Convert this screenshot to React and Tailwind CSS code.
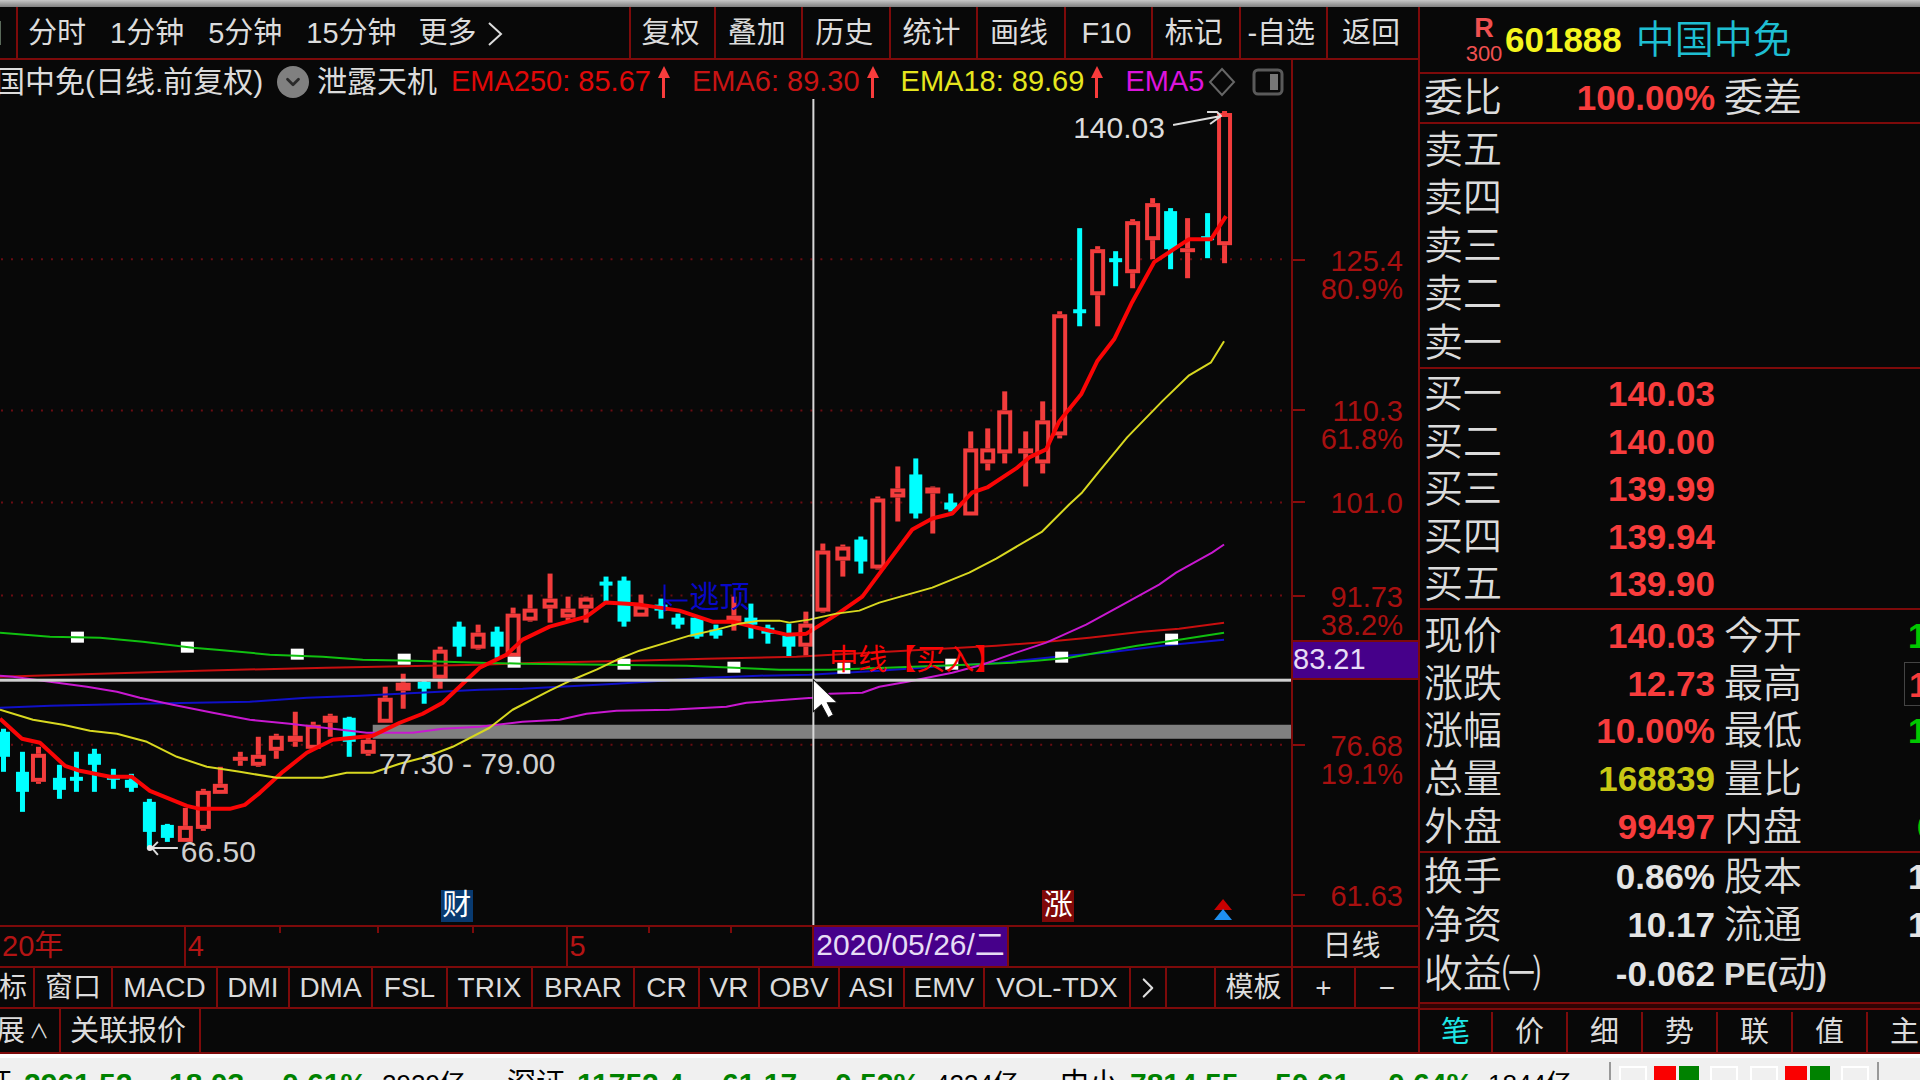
import React from "react";
import { ChevronDown, ChevronRight } from "lucide-react";

const PLOT = { left: 0, top: 100, width: 1292, height: 825 };

const up = "up";
const down = "down";

// [direction, x, high, low, body top, body bottom]
const CANDLES = [
  [down, 3, 729, 772, 732, 757],
  [down, 22, 752, 812, 772, 792],
  [up, 38, 747, 784, 754, 782],
  [down, 59, 765, 799, 778, 790],
  [down, 76, 752, 792, 777, 780],
  [down, 94, 749, 792, 754, 765],
  [down, 113, 769, 789, 776, 780],
  [down, 131, 774, 792, 780, 788],
  [down, 149, 799, 849, 802, 832],
  [down, 167, 824, 842, 825, 838],
  [up, 185, 808, 842, 826, 842],
  [up, 203, 789, 831, 791, 829],
  [up, 220, 767, 794, 784, 794],
  [up, 240, 752, 766, 757, 761],
  [up, 258, 737, 767, 755, 766],
  [up, 276, 734, 759, 736, 751],
  [up, 295, 712, 747, 736, 742],
  [up, 313, 722, 750, 725, 749],
  [up, 330, 714, 737, 716, 723],
  [down, 349, 717, 757, 718, 742],
  [up, 368, 737, 756, 740, 754],
  [up, 385, 687, 723, 698, 723],
  [up, 403, 674, 709, 683, 691],
  [down, 424, 680, 704, 682, 689],
  [up, 440, 647, 689, 650, 679],
  [down, 459, 622, 657, 627, 647],
  [up, 478, 625, 650, 633, 649],
  [down, 497, 627, 658, 632, 647],
  [up, 513, 608, 657, 614, 657],
  [up, 530, 595, 622, 609, 621],
  [up, 550, 574, 623, 599, 609],
  [up, 568, 597, 621, 609, 618],
  [up, 586, 597, 623, 598, 609],
  [down, 606, 577, 602, 582, 585],
  [down, 624, 577, 627, 581, 622],
  [up, 641, 595, 617, 606, 617],
  [down, 661, 599, 619, 605, 611],
  [down, 678, 614, 629, 618, 625],
  [down, 697, 617, 639, 618, 637],
  [down, 716, 625, 639, 630, 636],
  [up, 734, 597, 631, 616, 622],
  [down, 751, 604, 639, 618, 625],
  [down, 768, 625, 644, 628, 634],
  [down, 789, 624, 657, 636, 647],
  [up, 806, 612, 656, 624, 647],
  [up, 823, 544, 613, 551, 612],
  [up, 843, 545, 577, 547, 561],
  [down, 861, 537, 574, 540, 562],
  [up, 878, 497, 570, 499, 569],
  [up, 898, 467, 522, 489, 498],
  [down, 916, 459, 519, 475, 514],
  [up, 933, 487, 534, 488, 494],
  [down, 951, 494, 512, 503, 510],
  [up, 971, 432, 516, 449, 516],
  [up, 988, 429, 471, 449, 464],
  [up, 1005, 392, 464, 411, 454],
  [up, 1026, 432, 487, 449, 454],
  [up, 1043, 402, 474, 421, 464],
  [up, 1060, 312, 439, 315, 436],
  [down, 1080, 229, 327, 310, 313],
  [up, 1098, 247, 327, 250, 296],
  [down, 1116, 252, 287, 259, 263],
  [up, 1133, 220, 289, 222, 274],
  [up, 1153, 199, 260, 204, 241],
  [down, 1171, 209, 270, 212, 250],
  [up, 1188, 219, 279, 249, 253],
  [down, 1208, 214, 259, 237, 240],
  [up, 1225, 112, 264, 114, 246],
];

const EMA6 =
  "0,719 22,739 40,743 65,766 80,771 110,777 132,777 150,791 187,806 200,809 230,809 245,805 260,793 283,772 307,753 333,740 373,736 400,723 423,714 443,703 480,668 507,655 523,640 550,627 587,617 606,603 640,605 680,611 713,622 733,622 757,628 787,635 807,634 823,624 840,613 863,597 883,570 913,530 933,519 953,514 973,493 988,488 1017,469 1030,458 1047,450 1060,422 1082,395 1098,362 1115,340 1133,303 1155,263 1190,240 1212,240 1227,217";
const EMA18 =
  "0,710 33,720 63,725 90,731 117,734 147,742 177,757 207,767 240,772 277,778 323,778 347,773 373,773 400,764 427,757 453,747 490,728 513,710 550,691 573,680 597,670 620,659 640,651 667,643 690,636 717,630 740,624 760,621 780,621 790,623 810,620 837,614 860,611 880,603 933,588 970,573 997,559 1043,532 1070,505 1083,493 1100,472 1128,438 1163,402 1190,376 1212,363 1225,342";
const EMA55 =
  "0,676 13,677 50,682 87,687 117,692 140,698 173,705 213,713 250,720 290,724 333,729 367,733 413,733 443,729 480,727 523,722 560,720 587,714 617,711 670,710 727,707 747,703 813,698 830,694 863,693 880,687 908,682 953,673 983,665 1017,653 1047,643 1087,625 1120,607 1160,585 1177,573 1213,553 1225,545";
const EMA_BLUE =
  "0,708 50,706 140,704 250,702 307,698 360,696 420,693 480,690 523,689 617,684 707,678 760,676 810,675 880,671 950,666 1000,663 1067,656 1107,653 1163,646 1225,640";
const EMA_GREEN =
  "0,633 50,637 100,638 143,642 193,648 217,650 270,655 323,657 363,660 413,661 480,663 523,664 687,666 780,670 830,670 887,668 967,665 1013,663 1037,661 1070,658 1138,646 1180,640 1225,633";
const EMA250 =
  "0,677 67,675 200,671 327,668 480,665 540,663 633,661 707,659 797,657 833,655 997,646 1037,643 1090,638 1143,632 1180,629 1225,623";

const MARKERS = [
  [77, 637], [187, 647], [297, 654], [404, 659], [514, 662], [624, 664],
  [734, 667], [844, 668], [952, 664], [1062, 657], [1172, 639],
];

const GRID_LINES = [260, 411, 503, 596, 745];

const PRICES = [
  { y: 260, price: "125.4", pct: "80.9%" },
  { y: 410, price: "110.3", pct: "61.8%" },
  { y: 502, price: "101.0" },
  { y: 595, price: "91.73", pct: "38.2%" },
  { y: 744, price: "76.68", pct: "19.1%" },
  { y: 894, price: "61.63" },
];

const TOOLS = ["复权", "叠加", "历史", "统计", "画线", "F10", "标记", "-自选", "返回"];
const PERIODS = ["分时", "1分钟", "5分钟", "15分钟"];

const INDICATORS = [
  ["窗口", "w-[78px]"],
  ["MACD", "w-[105px]"],
  ["DMI", "w-[72px]"],
  ["DMA", "w-[83px]"],
  ["FSL", "w-[75px]"],
  ["TRIX", "w-[85px]"],
  ["BRAR", "w-[102px]"],
  ["CR", "w-[65px]"],
  ["VR", "w-[60px]"],
  ["OBV", "w-[80px]"],
  ["ASI", "w-[65px]"],
  ["EMV", "w-[80px]"],
  ["VOL-TDX", "w-[146px]"],
];

const RED = "text-[#f83c3c]";
const WHITE = "text-[#e4e4e4]";
const GREEN = "text-[#00c800]";

const SELLS = ["卖五", "卖四", "卖三", "卖二", "卖一"].map((label) => ({ label }));
const BUYS = [
  ["买一", "140.03"],
  ["买二", "140.00"],
  ["买三", "139.99"],
  ["买四", "139.94"],
  ["买五", "139.90"],
].map(([label, value]) => ({ label, value, tone: RED }));
const QUOTES = [
  { label: "现价", value: "140.03", tone: RED, label2: "今开", value2: "1", tone2: GREEN },
  { label: "涨跌", value: "12.73", tone: RED, label2: "最高", value2: "1", tone2: RED, boxed: true },
  { label: "涨幅", value: "10.00%", tone: RED, label2: "最低", value2: "1", tone2: GREEN },
  { label: "总量", value: "168839", tone: "text-[#c8c814]", label2: "量比" },
  { label: "外盘", value: "99497", tone: RED, label2: "内盘", value2: "6", tone2: GREEN, late: true },
];
const FUNDAMENTALS = [
  { label: "换手", value: "0.86%", tone: WHITE, label2: "股本", value2: "1", tone2: WHITE },
  { label: "净资", value: "10.17", tone: WHITE, label2: "流通", value2: "1", tone2: WHITE },
  { label: "收益㈠", value: "-0.062", tone: WHITE, label2: "PE" },
];

const SIDE_TABS = ["笔", "价", "细", "势", "联", "值", "主"];

const INDEXES = [
  ["上证", "2961.52", "-18.03", "-0.61%", "2929亿"],
  ["深证", "11752.4", "-61.17", "-0.52%", "4234亿"],
  ["中小", "7814.55", "-50.61", "-0.64%", "1844亿"],
];

function place(x, y) {
  return {
    left: `${((x - PLOT.left) / PLOT.width) * 100}%`,
    top: `${((y - PLOT.top) / PLOT.height) * 100}%`,
  };
}

function Candle({ data }) {
  const [dir, x, high, low, top, bottom] = data;
  if (dir === down) {
    return (
      <g fill="#00ffff">
        <rect x={x - 2} y={high} width="5" height={low - high} />
        <rect x={x - 6} y={top} width="13" height={Math.max(bottom - top, 4)} />
      </g>
    );
  }
  const small = bottom - top < 8;
  return (
    <g fill="#f23c3c">
      <rect x={x - 2} y={high} width="5" height={Math.max(top - high, 0)} />
      <rect x={x - 2} y={bottom} width="5" height={Math.max(low - bottom, 0)} />
      {small ? (
        <rect x={x - 7} y={top} width="15" height={bottom - top} />
      ) : (
        <rect
          x={x - 5}
          y={top + 2}
          width="11"
          height={bottom - top - 4}
          fill="#080808"
          stroke="#f23c3c"
          strokeWidth="4"
        />
      )}
    </g>
  );
}

function Plot() {
  return (
    <div className="relative min-h-0 flex-1">
      <svg
        className="absolute inset-0 size-full"
        viewBox="0 100 1292 825"
        preserveAspectRatio="none"
        role="img"
        aria-label="日线"
      >
        {GRID_LINES.map((y) => (
          <line key={y} x1="1" x2="1290" y1={y} y2={y} stroke="#6a0c12" strokeWidth="2" strokeDasharray="2 8" />
        ))}
        <rect x="373" y="725" width="919" height="14" fill="#808080" />
        {CANDLES.map((c) => (
          <Candle key={c[1]} data={c} />
        ))}
        <g fill="none" strokeWidth="2" strokeLinejoin="round">
          <polyline points={EMA250} stroke="#c80f0f" />
          <polyline points={EMA_BLUE} stroke="#1010c8" />
          <g fill="#fff">
            {MARKERS.map(([x, y]) => (
              <rect key={x} x={x - 6} y={y - 5} width="13" height="11" />
            ))}
          </g>
          <polyline points={EMA_GREEN} stroke="#10c010" />
          <polyline points={EMA55} stroke="#c818d0" />
          <polyline points={EMA6} stroke="#fa0505" strokeWidth="4" />
          <polyline points={EMA18} stroke="#d8d820" />
          <path d="M665 585V612M665 601H688M665 600L672 606" stroke="#0808c8" />
          <path d="M178 848H152M158 842L152 848L158 855" stroke="#dcdcdc" />
          <path d="M1174 126L1222 117M1208 113H1218L1222 117L1211 125" stroke="#dcdcdc" />
        </g>
        <circle cx="150" cy="848" r="3" fill="#e8e8e8" />
        <rect x="0" y="679" width="1292" height="3" fill="#d0d0d0" />
        <rect x="813" y="100" width="2" height="825" fill="#d8d8d8" />
        <path d="M1224 899L1233 910H1215Z" fill="#c80000" />
        <path d="M1224 909L1233 920H1215Z" fill="#1e90f0" />
        <path
          d="M814 680V712L822 705L829 718L834 715L828 703H838Z"
          fill="#fff"
          stroke="#111"
          strokeWidth="1"
        />
      </svg>
      <Note x={1074} y={129} className="text-[30px] text-[#dcdcdc]">140.03</Note>
      <Note x={379} y={764} className="text-[30px] text-[#d0d0d0]">77.30 - 79.00</Note>
      <Note x={181} y={852} className="text-[30px] text-[#d0d0d0]">66.50</Note>
      <Note x={690} y={597} className="text-[30px] text-[#0808c8]">逃顶</Note>
      <Note x={830} y={660} className="text-[29px] text-[#fa0505]">中线【买入】</Note>
      <Note x={441} y={906} className="flex h-8 w-8 items-center justify-center bg-[#083a70] text-white">财</Note>
      <Note x={1043} y={906} className="flex h-8 w-8 items-center justify-center bg-[#800808] text-white">涨</Note>
    </div>
  );
}

function Note({ x, y, className, children }) {
  return (
    <span className={`absolute -translate-y-1/2 whitespace-nowrap leading-none ${className}`} style={place(x, y)}>
      {children}
    </span>
  );
}

function UpArrow() {
  return (
    <svg width="14" height="32" viewBox="0 0 14 32" className="shrink-0" aria-hidden="true">
      <path d="M7 0L13 12H1Z" fill="#f83c3c" />
      <rect x="5" y="10" width="3" height="22" fill="#f83c3c" />
    </svg>
  );
}

function Ema({ name, value, tone }) {
  return (
    <span className={`flex items-center ${tone}`}>
      <span className={value ? "mr-1.5" : "mr-1"}>{value ? `${name}: ${value}` : name}</span>
      {value && <UpArrow />}
    </span>
  );
}

function ChartTitle() {
  return (
    <div className="flex h-[39px] shrink-0 items-center overflow-hidden whitespace-nowrap pt-1">
      <span className="-ml-[5px] w-[282px] shrink-0 text-[30px]">国中免(日线.前复权)</span>
      <button type="button" aria-label="展开" className="mr-2 flex size-8 items-center justify-center rounded-full bg-[#808080]">
        <ChevronDown size={22} color="#2a2a2a" strokeWidth={3} />
      </button>
      <span className="mr-3.5 text-[30px]">泄露天机</span>
      <div className="flex gap-[21px]">
        <Ema name="EMA250" value="85.67" tone="text-[#e00808]" />
        <Ema name="EMA6" value="89.30" tone="text-[#c81414]" />
        <Ema name="EMA18" value="89.69" tone="text-[#e6e61e]" />
        <Ema name="EMA5" tone="text-[#dc14dc]" />
      </div>
      <svg width="28" height="30" viewBox="0 0 28 30" className="mr-4 shrink-0" aria-hidden="true">
        <path d="M14 2L26 15L14 28L2 15Z" fill="none" stroke="#666" strokeWidth="2" />
      </svg>
      <button type="button" aria-label="侧栏" className="shrink-0">
        <svg width="32" height="28" viewBox="0 0 32 28" aria-hidden="true">
          <rect x="2" y="2" width="28" height="24" rx="4" fill="none" stroke="#5a5a5a" strokeWidth="3" />
          <rect x="18" y="6" width="8" height="16" fill="#777" />
        </svg>
      </button>
    </div>
  );
}

function Toolbar() {
  return (
    <div className="flex h-[53px] shrink-0 border-b-2 border-[#7d0a0a]">
      <div className="flex w-[18px] shrink-0 items-center border-r-2 border-[#7d0a0a]">
        <span className="h-6 w-px bg-[#5a6a5a]" />
      </div>
      <nav className="flex flex-1 items-center gap-6 pl-[10px] pt-0.5">
        {PERIODS.map((p) => (
          <button type="button" key={p}>{p}</button>
        ))}
        <button type="button" className="-ml-0.5 flex items-center">
          更多
          <svg width="32" height="28" viewBox="0 0 32 28" fill="none" stroke="currentColor" strokeWidth="2" aria-hidden="true">
            <path d="M12 3L24 14L12 25" />
          </svg>
        </button>
      </nav>
      <div className="grid w-[789px] shrink-0 grid-cols-[85px_repeat(7,minmax(0,1fr))_92px]">
        {TOOLS.map((t) => (
          <button type="button" key={t} className="whitespace-nowrap border-l-2 border-[#7d0a0a] pr-1 pt-0.5">{t}</button>
        ))}
      </div>
    </div>
  );
}

function PriceAxis() {
  return (
    <div className="flex w-[127px] shrink-0 flex-col border-l-2 border-[#7d0a0a] pt-[39px]">
      <div className="relative flex-1 text-[#a81010]">
        {PRICES.map(({ y, price, pct }) => (
          <div key={y} className="absolute inset-x-0" style={{ top: place(0, y).top }}>
            <div className="h-0.5 w-3 bg-[#8a0c0c]" />
            <div className="-mt-[14px] pr-[15px] text-right leading-7">
              <div>{price}</div>
              {pct && <div>{pct}</div>}
            </div>
          </div>
        ))}
        <div
          className="absolute inset-x-0 flex h-10 items-center border-y-2 border-[#7d0a0a] bg-[#46008a] text-[#e6dcf5]"
          style={{ top: place(0, 640).top }}
        >
          83.21
        </div>
      </div>
    </div>
  );
}

function TimeAxis() {
  const at = (x) => ({ left: `${(x / 1292) * 100}%` });
  return (
    <div className="flex h-[41px] shrink-0 border-t-2 border-[#7d0a0a]">
      <div className="relative flex-1 text-[#b41414]">
        <span className="absolute inset-y-0 left-0 flex items-center pl-0.5">20年</span>
        <span className="absolute inset-y-0 flex items-center border-l-2 border-[#7d0a0a] pl-0.5" style={at(184)}>4</span>
        <span className="absolute inset-y-0 flex items-center border-l-2 border-[#7d0a0a] pl-0.5" style={at(566)}>5</span>
        {[279, 377, 472, 649, 731].map((x) => (
          <span key={x} className="absolute top-0 h-1.5 w-0.5 bg-[#7d0a0a]" style={at(x)} />
        ))}
        <span
          className="absolute inset-y-0 flex w-[197px] items-center whitespace-nowrap border-x-2 border-[#7d0a0a] bg-[#46008a] pb-1 pl-0.5 text-[30px] text-[#e6dcf5]"
          style={at(813)}
        >
          2020/05/26/二
        </span>
      </div>
      <button type="button" className="w-[127px] border-l-2 border-[#7d0a0a] pr-2">日线</button>
    </div>
  );
}

function IndicatorBar() {
  const cell = "shrink-0 border-r-2 border-[#7d0a0a] whitespace-nowrap";
  return (
    <div className="flex h-[43px] shrink-0 border-y-2 border-[#7d0a0a] text-[28px]">
      <button type="button" className={`flex w-[35px] items-center justify-end overflow-hidden pr-1.5 ${cell}`}>指标</button>
      {INDICATORS.map(([name, width]) => (
        <button type="button" key={name} className={`${width} ${cell}`}>{name}</button>
      ))}
      <button type="button" aria-label="更多指标" className={`flex w-[36px] items-center justify-center ${cell}`}>
        <ChevronRight size={36} strokeWidth={1.5} />
      </button>
      <span className={`flex-1 ${cell}`} />
      <button type="button" className="w-[75px] shrink-0">模板</button>
      <button type="button" className="w-[63px] shrink-0 border-l-2 border-[#7d0a0a]">+</button>
      <button type="button" className="w-[64px] shrink-0 border-l-2 border-[#7d0a0a]">−</button>
    </div>
  );
}

function Row({ label, value, tone, label2, value2, tone2, boxed, late }) {
  return (
    <tr>
      <th scope="row" className="w-[84px] whitespace-nowrap p-0 pl-1 text-left font-[350]">{label}</th>
      <td className={`w-[212px] p-0 pr-px text-right font-["Liberation_Sans"] text-[35px] font-bold ${tone || ""}`}>{value}</td>
      <th scope="row" className="w-[188px] whitespace-nowrap p-0 pl-2 text-left font-[350]">
        {label2 === "PE" ? (
          <span className="flex items-center">
            <span className="text-[32px] font-bold">PE(</span>
            动
            <span className="text-[32px] font-bold">)</span>
          </span>
        ) : (
          label2
        )}
      </th>
      <td className={`p-0 font-["Liberation_Sans"] text-[35px] font-bold ${tone2 || ""}`}>
        <div className={`h-11 overflow-hidden ${boxed ? "border border-r-0 border-[#444]" : ""} ${late ? "pl-[13px]" : "pl-1"}`}>{value2}</div>
      </td>
    </tr>
  );
}

function Block({ rows, caption, className }) {
  return (
    <div className={`flex min-h-0 overflow-hidden border-b-2 border-[#7d0a0a] ${className}`}>
      <table className="h-full w-full table-fixed border-collapse text-[39px] leading-[44px]" aria-label={caption}>
        <tbody>
          {rows.map((r) => (
            <Row key={r.label} {...r} />
          ))}
        </tbody>
      </table>
    </div>
  );
}

function QuotePanel() {
  return (
    <aside className="flex w-[502px] shrink-0 flex-col overflow-hidden border-l-2 border-[#7d0a0a] text-[#dcdcdc]">
      <header className="flex h-[67px] shrink-0 items-center border-b-2 border-[#7d0a0a] pl-[45px]">
        <div className="mr-0.5 flex w-[38px] flex-col items-center text-[#f05050]">
          <span className="text-[27px] font-bold leading-7">R</span>
          <span className="text-[22px] leading-6">300</span>
        </div>
        <span className="mr-3.5 text-[35px] font-bold text-[#f5f51e]">601888</span>
        <h1 className="text-[39px] font-[350] text-[#1ebed2]">中国中免</h1>
      </header>
      <Block caption="委比" className="h-[50px] shrink-0" rows={[{ label: "委比", value: "100.00%", tone: RED, label2: "委差" }]} />
      <Block caption="卖盘" className="flex-[240] pt-0.5" rows={SELLS} />
      <Block caption="买盘" className="flex-[237] pt-0.5" rows={BUYS} />
      <Block caption="行情" className="flex-[238] pt-0.5" rows={QUOTES} />
      <Block caption="基本面" className="flex-[145] pb-1" rows={FUNDAMENTALS} />
      <div className="h-1 shrink-0 bg-[#300404]" />
      <div className="flex h-[46px] shrink-0 border-y-2 border-[#7d0a0a] pt-0.5 text-[29px]">
        {SIDE_TABS.map((t, i) => (
          <button
            type="button"
            key={t}
            className={`shrink-0 border-r-2 border-[#7d0a0a] ${i === 0 ? "w-[73px] text-[#1ee6e6]" : "w-[75px]"}`}
          >
            {t}
          </button>
        ))}
      </div>
    </aside>
  );
}

function Lights() {
  return (
    <div className="flex gap-[5px]">
      <span className="h-4 w-7 border-2 border-white" />
      <span className="ml-0.5 h-4 w-[22px] bg-[#fa0000]" />
      <span className="-ml-0.5 h-4 w-5 bg-[#008200]" />
      <span className="ml-1.5 h-4 w-7 border-2 border-white" />
    </div>
  );
}

function StatusBar() {
  return (
    <footer className="flex h-[26px] shrink-0 overflow-hidden border-t-4 border-white bg-[#f0f0f0] text-black">
      <div className="-ml-[46px] flex shrink-0 pt-2">
        {INDEXES.map(([name, value, change, pct, amount]) => (
          <div key={name} className="grid w-[553px] grid-cols-[70px_135px_113px_110px_125px] whitespace-nowrap leading-9">
            <span>{name}</span>
            <span className="text-[30px] font-bold text-[#008200]">{value}</span>
            <span className="text-[30px] font-bold text-[#008200]">{change}</span>
            <span className="text-[30px] font-bold text-[#008200]">{pct}</span>
            <span className="text-[26px]">{amount}</span>
          </div>
        ))}
      </div>
      <div className="ml-[-4px] mt-1 flex shrink-0 gap-3 border-x-2 border-[#999] px-2 pt-1">
        <Lights />
        <Lights />
      </div>
    </footer>
  );
}

export default function App() {
  return (
    <div className='flex h-screen flex-col overflow-hidden bg-[#080808] font-["Liberation_Sans","Noto_Sans_CJK_SC",sans-serif] text-[29px] leading-none text-[#dcdcdc]'>
      <div className="h-[7px] shrink-0 bg-gradient-to-b from-[#c8c8c8] to-[#808080]" />
      <main className="flex min-h-0 flex-1">
        <section className="flex min-w-0 flex-1 flex-col">
          <Toolbar />
          <div className="flex min-h-0 flex-1">
            <div className="flex min-w-0 flex-1 flex-col">
              <ChartTitle />
              <Plot />
            </div>
            <PriceAxis />
          </div>
          <TimeAxis />
          <IndicatorBar />
          <div className="flex h-[45px] shrink-0 border-b-2 border-[#7d0a0a]">
            <button type="button" className="flex w-[61px] items-center justify-end gap-1 overflow-hidden whitespace-nowrap border-r-2 border-[#7d0a0a] pr-2.5 pt-0.5">
              扩展<span className="text-[20px]">∧</span>
            </button>
            <button type="button" className="w-[140px] whitespace-nowrap border-r-2 border-[#7d0a0a] pr-1 pt-0.5">关联报价</button>
          </div>
        </section>
        <QuotePanel />
      </main>
      <StatusBar />
    </div>
  );
}
